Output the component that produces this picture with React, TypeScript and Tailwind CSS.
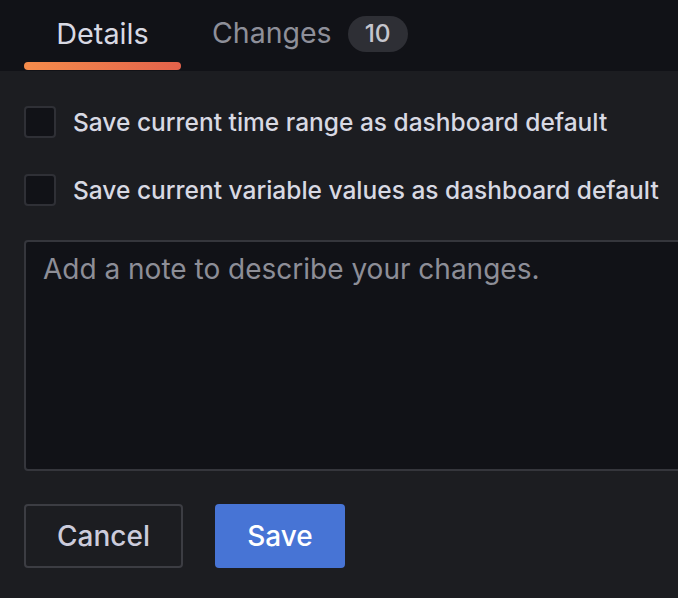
import { useState } from "react";

function Checkbox({ label }: { label: string }) {
  const [checked, setChecked] = useState(false);
  return (
    <label className="flex items-center gap-[17px] cursor-pointer">
      <span
        onClick={() => setChecked(!checked)}
        className="w-[32px] h-[32px] shrink-0 rounded-[4px] border-2 border-[#2f3036] bg-[#111217]"
      />
      <span className="text-[24.5px] font-medium text-[#d8d9e3] leading-none whitespace-nowrap">
        {label}
      </span>
    </label>
  );
}

export default function App() {
  const [tab, setTab] = useState<"details" | "changes">("details");

  return (
    <div className="w-[678px] h-[598px] overflow-hidden bg-[#1c1d21] font-['Inter',sans-serif]">
      <div className="h-[71px] bg-[#111217] flex items-stretch pl-[24px] gap-[32px]">
        <button
          onClick={() => setTab("details")}
          className="relative w-[157px] flex items-center justify-center pb-[4px] text-[28.8px] text-[#d8d9e3]"
        >
          Details
          {tab === "details" && (
            <span className="absolute left-0 right-0 bottom-[1px] h-[8px] rounded-full bg-gradient-to-r from-[#f58c4b] to-[#e3624b]" />
          )}
        </button>
        <button
          onClick={() => setTab("changes")}
          className="-ml-[1px] flex items-center gap-[16px] pb-[4px] text-[28.5px] text-[#8e8f99]"
        >
          Changes
          <span className="h-[36px] px-[17px] rounded-full bg-[#2e2f35] text-[24.5px] font-medium text-[#c5c6ce] flex items-center">
            10
          </span>
        </button>
      </div>

      <div className="pl-[24px] pt-[35px] flex flex-col">
        <div className="flex flex-col gap-[36px]">
          <Checkbox label="Save current time range as dashboard default" />
          <Checkbox label="Save current variable values as dashboard default" />
        </div>

        <textarea
          placeholder="Add a note to describe your changes."
          className="mt-[34px] w-[680px] h-[231px] resize-none rounded-l-[4px] border-2 border-[#35363c] bg-[#111217] px-[17px] py-[6px] text-[28px] text-[#d8d9e3] placeholder:text-[#8d8e97] outline-none"
        />

        <div className="mt-[33px] flex gap-[32px]">
          <button className="w-[159px] h-[64px] rounded-[4px] border-2 border-[#3c3d43] text-[28px] font-medium text-[#ccccdc]">
            Cancel
          </button>
          <button className="w-[130px] h-[64px] rounded-[4px] bg-[#4774d5] text-[28px] font-medium text-white">
            Save
          </button>
        </div>
      </div>
    </div>
  );
}
